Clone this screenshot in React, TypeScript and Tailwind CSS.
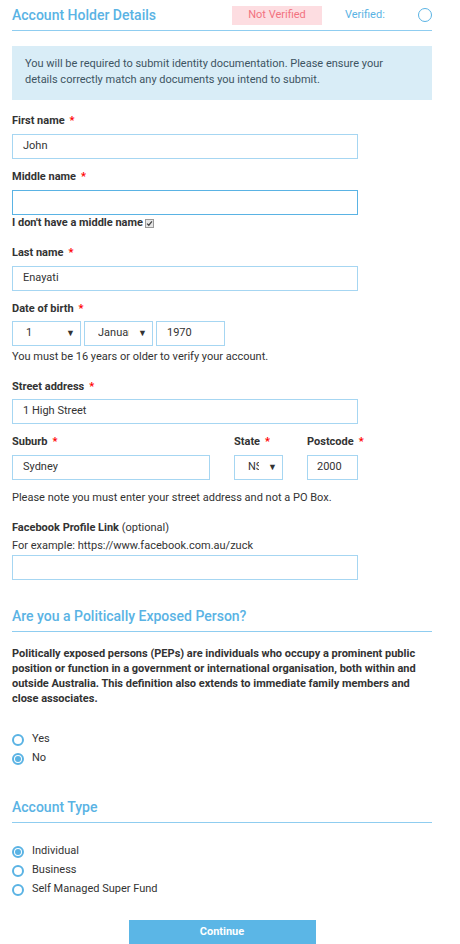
import React from "react";

const blue = "text-[#5ab3e4]";

function Label({ text, required, className = "" }: { text: string; required?: boolean; className?: string }) {
  return (
    <div className={`h-[16px] leading-[16px] text-[11px] font-bold text-[#333] ${className}`}>
      {text}
      {required && <span className="ml-[5px] text-[#ff0000]">*</span>}
    </div>
  );
}

function TextInput({ value, focused, className = "w-[346px]" }: { value?: string; focused?: boolean; className?: string }) {
  return (
    <div
      className={`flex h-[25px] items-center border bg-white pl-[10px] text-[11px] text-[#333] ${
        focused ? "border-[#5ab3e4]" : "border-[#a6d6f2]"
      } ${className}`}
    >
      {value}
    </div>
  );
}

function FakeSelect({ value, w, textW }: { value: string; w: string; textW: string }) {
  return (
    <div className={`flex h-[25px] items-center border border-[#a6d6f2] bg-white pl-[13px] pr-[5px] text-[11px] text-[#333] ${w}`}>
      <span className={`overflow-hidden whitespace-nowrap ${textW}`}>{value}</span>
      <span className="ml-auto text-[9px] text-[#333]">▼</span>
    </div>
  );
}

function Radio({ label, checked }: { label: string; checked?: boolean }) {
  return (
    <div className="flex h-[19px] items-center">
      <span className="flex h-[12px] w-[12px] items-center justify-center rounded-full border-2 border-[#5ab3e4] bg-white">
        {checked && <span className="h-[6px] w-[6px] rounded-full bg-[#5ab3e4]" />}
      </span>
      <span className="ml-[8px] text-[11px] text-[#333]">{label}</span>
    </div>
  );
}

function SectionHeading({ title, className = "" }: { title: string; className?: string }) {
  return (
    <div className={`border-b border-[#8fcdf0] pb-[5px] ${className}`}>
      <div className={`leading-[20px] text-[14px] font-medium ${blue}`}>{title}</div>
    </div>
  );
}

export default function App() {
  return (
    <div className="min-h-[944px] w-[460px] overflow-hidden bg-white px-3 font-['Roboto',sans-serif]">
      <div className="w-[420px]">
        {/* header */}
        <div className="flex h-[31px] items-center border-b border-[#8fcdf0]">
          <div className={`w-[220px] text-[14px] font-medium ${blue}`}>Account Holder Details</div>
          <div className="flex h-[19px] w-[90px] items-center justify-center bg-[#fddde1] text-[11px] text-[#f2727f]">
            Not Verified
          </div>
          <div className={`ml-[23px] text-[11px] ${blue}`}>Verified:</div>
          <span className="ml-auto h-[14px] w-[14px] rounded-full border-[1.5px] border-[#5ab3e4]" />
        </div>

        <div className="mt-[15px] h-[54px] bg-[#d9edf7] pl-[13px] pr-[30px] pt-[10px] text-[11px] leading-[16px] text-[#3d5462]">
          You will be required to submit identity documentation. Please ensure your details correctly match any
          documents you intend to submit.
        </div>

        <Label text="First name" required className="mt-[13px]" />
        <TextInput value="John" className="mt-[5px] w-[346px]" />

        <Label text="Middle name" required className="mt-[10px]" />
        <TextInput focused className="mt-[5px] w-[346px]" />
        <div className="flex h-[16px] items-center text-[11px] font-bold text-[#333]">
          I don't have a middle name
          <span className="ml-[2px] flex h-[9px] w-[9px] items-center justify-center border border-[#999] bg-[#e6e6e6]">
            <svg viewBox="0 0 10 10" className="h-[7px] w-[7px]">
              <path d="M1.5 5.2 L4 7.5 L8.5 2" fill="none" stroke="#444" strokeWidth="1.8" />
            </svg>
          </span>
        </div>

        <Label text="Last name" required className="mt-[14px]" />
        <TextInput value="Enayati" className="mt-[5px] w-[346px]" />

        <Label text="Date of birth" required className="mt-[10px]" />
        <div className="mt-[4px] flex gap-[3px]">
          <FakeSelect value="1" w="w-[69px]" textW="w-[31px]" />
          <FakeSelect value="January" w="w-[69px]" textW="w-[31px]" />
          <TextInput value="1970" className="w-[69px]" />
        </div>
        <div className="mt-[3px] h-[16px] leading-[16px] text-[11px] text-[#333]">
          You must be 16 years or older to verify your account.
        </div>

        <Label text="Street address" required className="mt-[14px]" />
        <TextInput value="1 High Street" className="mt-[4px] w-[346px]" />

        <div className="mt-[10px] flex">
          <div className="w-[222px]">
            <Label text="Suburb" required />
            <TextInput value="Sydney" className="mt-[5px] w-[198px]" />
          </div>
          <div className="w-[73px]">
            <Label text="State" required />
            <div className="mt-[5px]">
              <FakeSelect value="NSW" w="w-[49px]" textW="w-[11px]" />
            </div>
          </div>
          <div>
            <Label text="Postcode" required />
            <TextInput value="2000" className="mt-[5px] w-[51px] !pl-[9px]" />
          </div>
        </div>

        <div className="mt-[10px] h-[16px] leading-[16px] text-[11px] text-[#333]">
          Please note you must enter your street address and not a PO Box.
        </div>

        <div className="mt-[14px] h-[16px] leading-[16px] text-[11px] text-[#333]">
          <span className="font-bold">Facebook Profile Link</span> (optional)
        </div>
        <div className="mt-[2px] h-[16px] leading-[16px] text-[11px] text-[#333]">
          For example: https://www.facebook.com.au/zuck
        </div>
        <TextInput className="mt-[1px] w-[346px]" />

        <SectionHeading title="Are you a Politically Exposed Person?" className="mt-[26px]" />
        <p className="mt-[14px] text-[11px] font-bold leading-[15px] text-[#333]">
          Politically exposed persons (PEPs) are individuals who occupy a prominent public position or function in a
          government or international organisation, both within and outside Australia. This definition also extends
          to immediate family members and close associates.
        </p>

        <div className="mt-[24px]">
          <Radio label="Yes" />
          <Radio label="No" checked />
        </div>

        <SectionHeading title="Account Type" className="mt-[29px]" />

        <div className="mt-[19px]">
          <Radio label="Individual" checked />
          <Radio label="Business" />
          <Radio label="Self Managed Super Fund" />
        </div>

        <div className="mt-[21px] flex justify-center">
          <button className="h-[25px] w-[187px] bg-[#5bb6e6] text-[11px] font-bold text-white">Continue</button>
        </div>
      </div>
    </div>
  );
}
